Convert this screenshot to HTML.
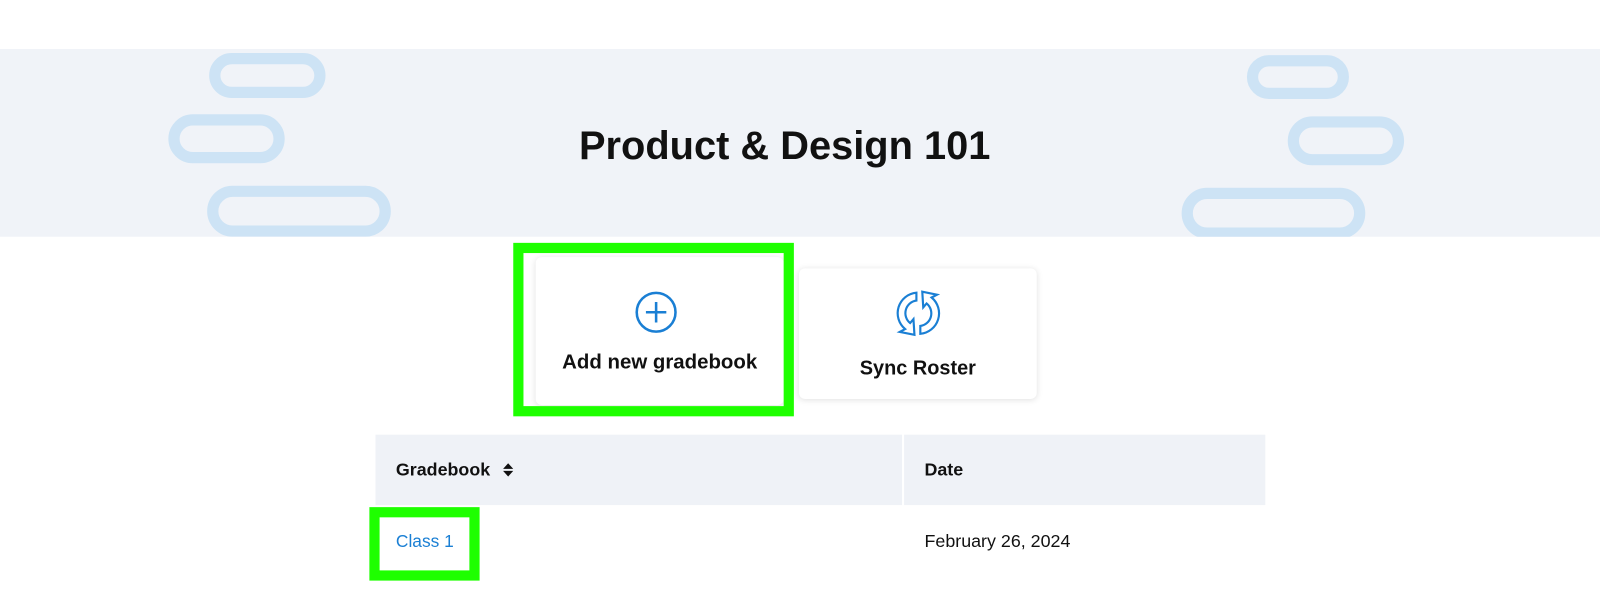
<!DOCTYPE html>
<html><head><style>
*{margin:0;padding:0;box-sizing:border-box}
body{width:1600px;height:605px;background:#fff;font-family:"Liberation Sans",sans-serif;position:relative;overflow:hidden;color:#111}
#w{position:absolute;left:0;top:0;width:1568px;height:593px;transform:scale(1.0204);transform-origin:0 0}
.banner{position:absolute;left:0;top:48px;width:1568px;height:184px;background:#f0f3f8;overflow:hidden}
.pill{position:absolute;border:11px solid #cde3f5;border-radius:30px}
h1{position:absolute;left:0;width:1538px;top:122px;text-align:center;font-size:39px;font-weight:bold;color:#111}
.card{position:absolute;background:#fff;border-radius:6px;box-shadow:0 1px 6px rgba(0,0,0,.12);text-align:center;font-weight:bold}
.gb{position:absolute;border:10px solid #1eff00}
.th{position:absolute;top:426px;height:69px;background:#eff2f7;font-weight:bold;font-size:17.5px;line-height:69px}
</style></head><body><div id="w">
<div class="banner">
<div class="pill" style="left:205px;top:4px;width:114px;height:44px"></div>
<div class="pill" style="left:165px;top:64px;width:114px;height:48px"></div>
<div class="pill" style="left:203px;top:134px;width:180px;height:50px"></div>
<div class="pill" style="left:1222px;top:6px;width:100px;height:43px"></div>
<div class="pill" style="left:1262px;top:66px;width:114px;height:48px"></div>
<div class="pill" style="left:1158px;top:136px;width:180px;height:50px"></div>
</div>
<h1>Product &amp; Design 101</h1>
<div class="card" style="left:525px;top:252px;width:243px;height:145px">
<svg style="position:absolute;left:97px;top:33px" width="42" height="42" viewBox="0 0 42 42"><circle cx="21" cy="21" r="19" fill="none" stroke="#1a7fd4" stroke-width="2.5"/><path d="M21 11v20M11 21h20" stroke="#1a7fd4" stroke-width="2.5"/></svg>
<div style="position:absolute;left:0;width:100%;top:92px;font-size:20px">Add new gradebook</div>
</div>
<div class="gb" style="left:503px;top:238px;width:275px;height:170px"></div>
<div class="card" style="left:783px;top:263px;width:233px;height:128px">
<svg style="position:absolute;left:93px;top:21px" width="48" height="46" viewBox="0 0 50 46" fill="none" stroke="#1a7fd4" stroke-width="2.2" stroke-linejoin="miter"><path id="p" d="M23 2A21 21 0 0 0 11.5 39.1L6 42L21 45L20 29L16.6 33A13 13 0 0 1 23 10Z"/><use href="#p" transform="rotate(180 25 23)"/></svg>
<div style="position:absolute;left:0;width:100%;top:87px;font-size:19.5px">Sync Roster</div>
</div>
<div class="th" style="left:368px;width:516px;padding-left:20px">Gradebook <svg style="margin-left:8px;vertical-align:-1px" width="10" height="13" viewBox="0 0 10 13"><path d="M5 0L10 5.5H0ZM5 13L0 7.5H10Z" fill="#111"/></svg></div>
<div class="th" style="left:886px;width:354px;padding-left:20px">Date</div>
<div style="position:absolute;left:388px;top:521px;font-size:17px;color:#1a7fd4">Class 1</div>
<div style="position:absolute;left:906px;top:520px;font-size:17.5px">February 26, 2024</div>
<div class="gb" style="left:362px;top:497px;width:108px;height:72px"></div>
</div></body></html>
